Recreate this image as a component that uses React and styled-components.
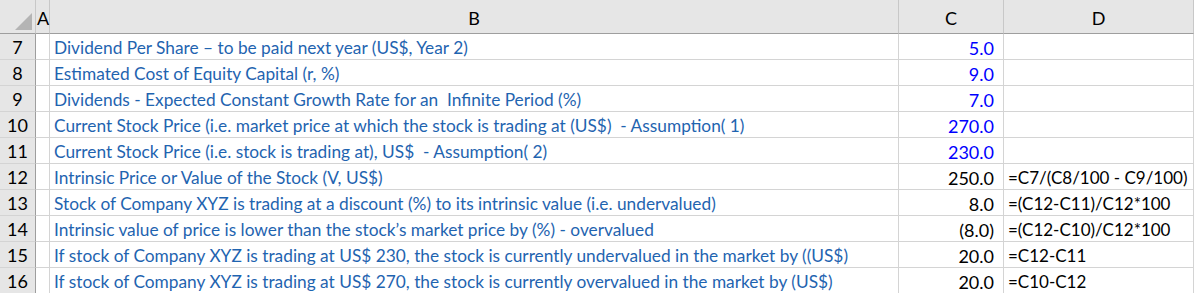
import React from "react";
import styled, { createGlobalStyle } from "styled-components";

const GlobalStyle = createGlobalStyle`
  html, body {
    margin: 0;
    padding: 0;
    background: #ffffff;
  }
  body {
    font-family: Lato, "Liberation Sans", sans-serif;
  }
`;

const Sheet = styled.div`
  display: grid;
  grid-template-columns: 36px 14px 849px 105px 1fr;
  grid-auto-rows: 26px;
  grid-template-rows: 34px;
  width: 1194px;
  height: 293px;
  overflow: hidden;
  font-size: 17px;
  background: #ffffff;
`;

const Corner = styled.div`
  position: relative;
  background: #e6e6e6;
  border-right: 1px solid #c8c8c8;
  border-bottom: 1px solid #9e9e9e;

  &::after {
    content: "";
    position: absolute;
    right: 3px;
    bottom: 3px;
    width: 0;
    height: 0;
    border-style: solid;
    border-width: 0 0 17px 17px;
    border-color: transparent transparent #b4b4b4 transparent;
  }
`;

const ColHead = styled.div`
  display: flex;
  align-items: flex-end;
  justify-content: ${({ $left }) => ($left ? "flex-start" : "center")};
  padding: 0 0 4px ${({ $left }) => ($left ? "1px" : "0")};
  background: #e6e6e6;
  border-right: 1px solid #c8c8c8;
  border-bottom: 1px solid #9e9e9e;
  color: #000000;
  font-size: 18px;
`;

const RowHead = styled.div`
  display: flex;
  align-items: center;
  justify-content: center;
  background: #e6e6e6;
  border-right: 1px solid #9e9e9e;
  border-bottom: 1px solid #d4d4d4;
  color: #000000;
  font-size: 18px;
  padding-top: 1px;
`;

const Cell = styled.div`
  display: flex;
  align-items: center;
  justify-content: ${({ $right }) => ($right ? "flex-end" : "flex-start")};
  padding: 2px ${({ $right }) => ($right ? "9px" : "3px")} 0 ${({ $right }) => ($right ? "0" : "4px")};
  border-right: 1px solid #d4d4d4;
  border-bottom: 1px solid #d4d4d4;
  color: ${({ $color }) => $color || "#000000"};
  font-size: ${({ $size }) => $size || "17px"};
  white-space: pre;
  overflow: visible;
`;

const rows = [
  { n: 7, b: "Dividend Per Share \u2013 to be paid next year (US$, Year 2)", c: "5.0", input: true, d: "" },
  { n: 8, b: "Estimated Cost of Equity Capital (r, %)", c: "9.0", input: true, d: "" },
  { n: 9, b: "Dividends - Expected Constant Growth Rate for an  Infinite Period (%)", c: "7.0", input: true, d: "" },
  { n: 10, b: "Current Stock Price (i.e. market price at which the stock is trading at (US$)  - Assumption( 1)", c: "270.0", input: true, d: "" },
  { n: 11, b: "Current Stock Price (i.e. stock is trading at), US$  - Assumption( 2)", c: "230.0", input: true, d: "" },
  { n: 12, b: "Intrinsic Price or Value of the Stock (V, US$)", c: "250.0", d: "=C7/(C8/100 - C9/100)" },
  { n: 13, b: "Stock of Company XYZ is trading at a discount (%) to its intrinsic value (i.e. undervalued)", c: "8.0", d: "=(C12-C11)/C12*100" },
  { n: 14, b: "Intrinsic value of price is lower than the stock\u2019s market price by (%) - overvalued", c: "(8.0)", d: "=(C12-C10)/C12*100" },
  { n: 15, b: "If stock of Company XYZ is trading at US$ 230, the stock is currently undervalued in the market by ((US$)", c: "20.0", d: "=C12-C11" },
  { n: 16, b: "If stock of Company XYZ is trading at US$ 270, the stock is currently overvalued in the market by (US$)", c: "20.0", d: "=C10-C12" },
];

export default function App() {
  return (
    <>
      <GlobalStyle />
      <Sheet>
        <Corner />
        <ColHead $left>A</ColHead>
        <ColHead>B</ColHead>
        <ColHead>C</ColHead>
        <ColHead>D</ColHead>
        {rows.map((r) => (
          <React.Fragment key={r.n}>
            <RowHead>{r.n}</RowHead>
            <Cell />
            <Cell $size="17.3px" $color="#1f64b0">{r.b}</Cell>
            <Cell $right $size="18px" $color={r.input ? "#0000ff" : "#000000"}>
              {r.c}
            </Cell>
            <Cell>{r.d}</Cell>
          </React.Fragment>
        ))}
      </Sheet>
    </>
  );
}
